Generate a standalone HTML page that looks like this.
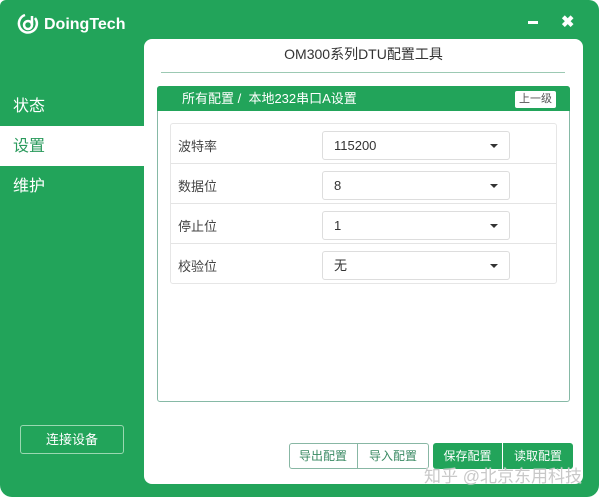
<!DOCTYPE html>
<html><head><meta charset="utf-8"><style>
*{margin:0;padding:0;box-sizing:border-box}
body{width:600px;height:499px;background:#fff;position:relative;overflow:hidden;font-family:"Liberation Sans","Noto Sans CJK SC",sans-serif}
.win{position:absolute;left:0;top:0;width:599px;height:497px;background:#22a45a;border-radius:6px 10px 12px 12px}
.abs{position:absolute}
.logo{left:17px;top:12px;color:#fff;font-weight:bold;font-size:16px}
.nav{left:0;width:144px;height:40px;color:#fff;font-size:16px;padding-left:13px;line-height:42px}
.panel{left:144px;top:39px;width:439px;height:445px;background:#fff;border-radius:8px}
.title{left:144px;top:44px;width:439px;text-align:center;font-size:14px;color:#333}
.hr{left:161px;top:72px;width:404px;height:1px;background:#9cc9b3}
.box{left:157px;top:86px;width:413px;height:316px;border:1px solid #86b9a6;border-radius:3px}
.hdr{left:157px;top:86px;width:413px;height:25px;background:#22a45a;border-radius:3px 3px 0 0;color:#fff;font-size:13px;line-height:25px;padding-left:25px}
.up{left:515px;top:91px;width:41px;height:17px;background:#fff;border-radius:2px;font-size:11px;color:#555;text-align:center;line-height:17px}
.tbl{left:170px;top:123px;width:387px;height:161px;border:1px solid #e6e6e6;border-radius:3px}
.row{position:absolute;left:0;width:385px;height:40px;border-bottom:1px solid #e4e4e4;font-size:13px;color:#444;line-height:46px;padding-left:7px}
.sel{position:absolute;left:151px;top:7px;width:188px;height:29px;border:1px solid #ddd;border-radius:3px;line-height:28px;padding-left:11px;font-size:13px;color:#333}
.sel:after{content:"";position:absolute;right:11px;top:12px;border-left:4px solid transparent;border-right:4px solid transparent;border-top:4px solid #333}
.btn{height:26px;top:443px;font-size:12px;line-height:26px;text-align:center}
</style></head><body>
<div class="win"></div>
<div class="abs logo"><svg width="22" height="22" viewBox="0 0 22 22" style="vertical-align:-5px;margin-right:5px"><path d="M8 3 A9 9 0 1 0 18 6" fill="none" stroke="#fff" stroke-width="2.5"/><circle cx="11" cy="13" r="4" fill="none" stroke="#fff" stroke-width="2.5"/><path d="M15 4 V13" stroke="#fff" stroke-width="2.5"/></svg>DoingTech</div>
<div class="abs" style="left:528px;top:21px;width:10px;height:3px;background:#fff"></div>
<div class="abs" style="left:561px;top:12px;color:#fff;font-size:16px;font-weight:bold">✖</div>
<div class="abs nav" style="top:86px">状态</div>
<div class="abs nav" style="top:126px;background:#fff;color:#2a9a5c">设置</div>
<div class="abs nav" style="top:166px">维护</div>
<div class="abs" style="left:20px;top:425px;width:104px;height:29px;border:1px solid #9ad8b1;border-radius:3px;color:#fff;font-size:13px;text-align:center;line-height:27px">连接设备</div>
<div class="abs panel"></div>
<div class="abs title">OM300系列DTU配置工具</div>
<div class="abs hr"></div>
<div class="abs box"></div>
<div class="abs hdr">所有配置 /&nbsp; 本地232串口A设置</div>
<div class="abs up">上一级</div>
<div class="abs tbl">
<div class="row" style="top:0">波特率<div class="sel">115200</div></div>
<div class="row" style="top:40px">数据位<div class="sel">8</div></div>
<div class="row" style="top:80px">停止位<div class="sel">1</div></div>
<div class="row" style="top:120px;border:none">校验位<div class="sel">无</div></div>
</div>
<div class="abs btn" style="left:289px;width:140px;border-radius:3px;border:1px solid #88b7a4"></div>
<div class="abs btn" style="left:289px;width:69px;color:#3a8a63;border-right:1px solid #88b7a4">导出配置</div>
<div class="abs btn" style="left:358px;width:70px;color:#3a8a63">导入配置</div>
<div class="abs btn" style="left:433px;width:140px;background:#22a45a;border-radius:3px"></div>
<div class="abs btn" style="left:433px;width:70px;color:#fff;border-right:1px solid #fff">保存配置</div>
<div class="abs btn" style="left:503px;width:70px;color:#fff">读取配置</div>
<div class="abs" style="left:424px;top:462px;font-size:17px;color:#c8c8c8;text-shadow:0 0 1px #fff">知乎 @北京东用科技</div>
</body></html>
